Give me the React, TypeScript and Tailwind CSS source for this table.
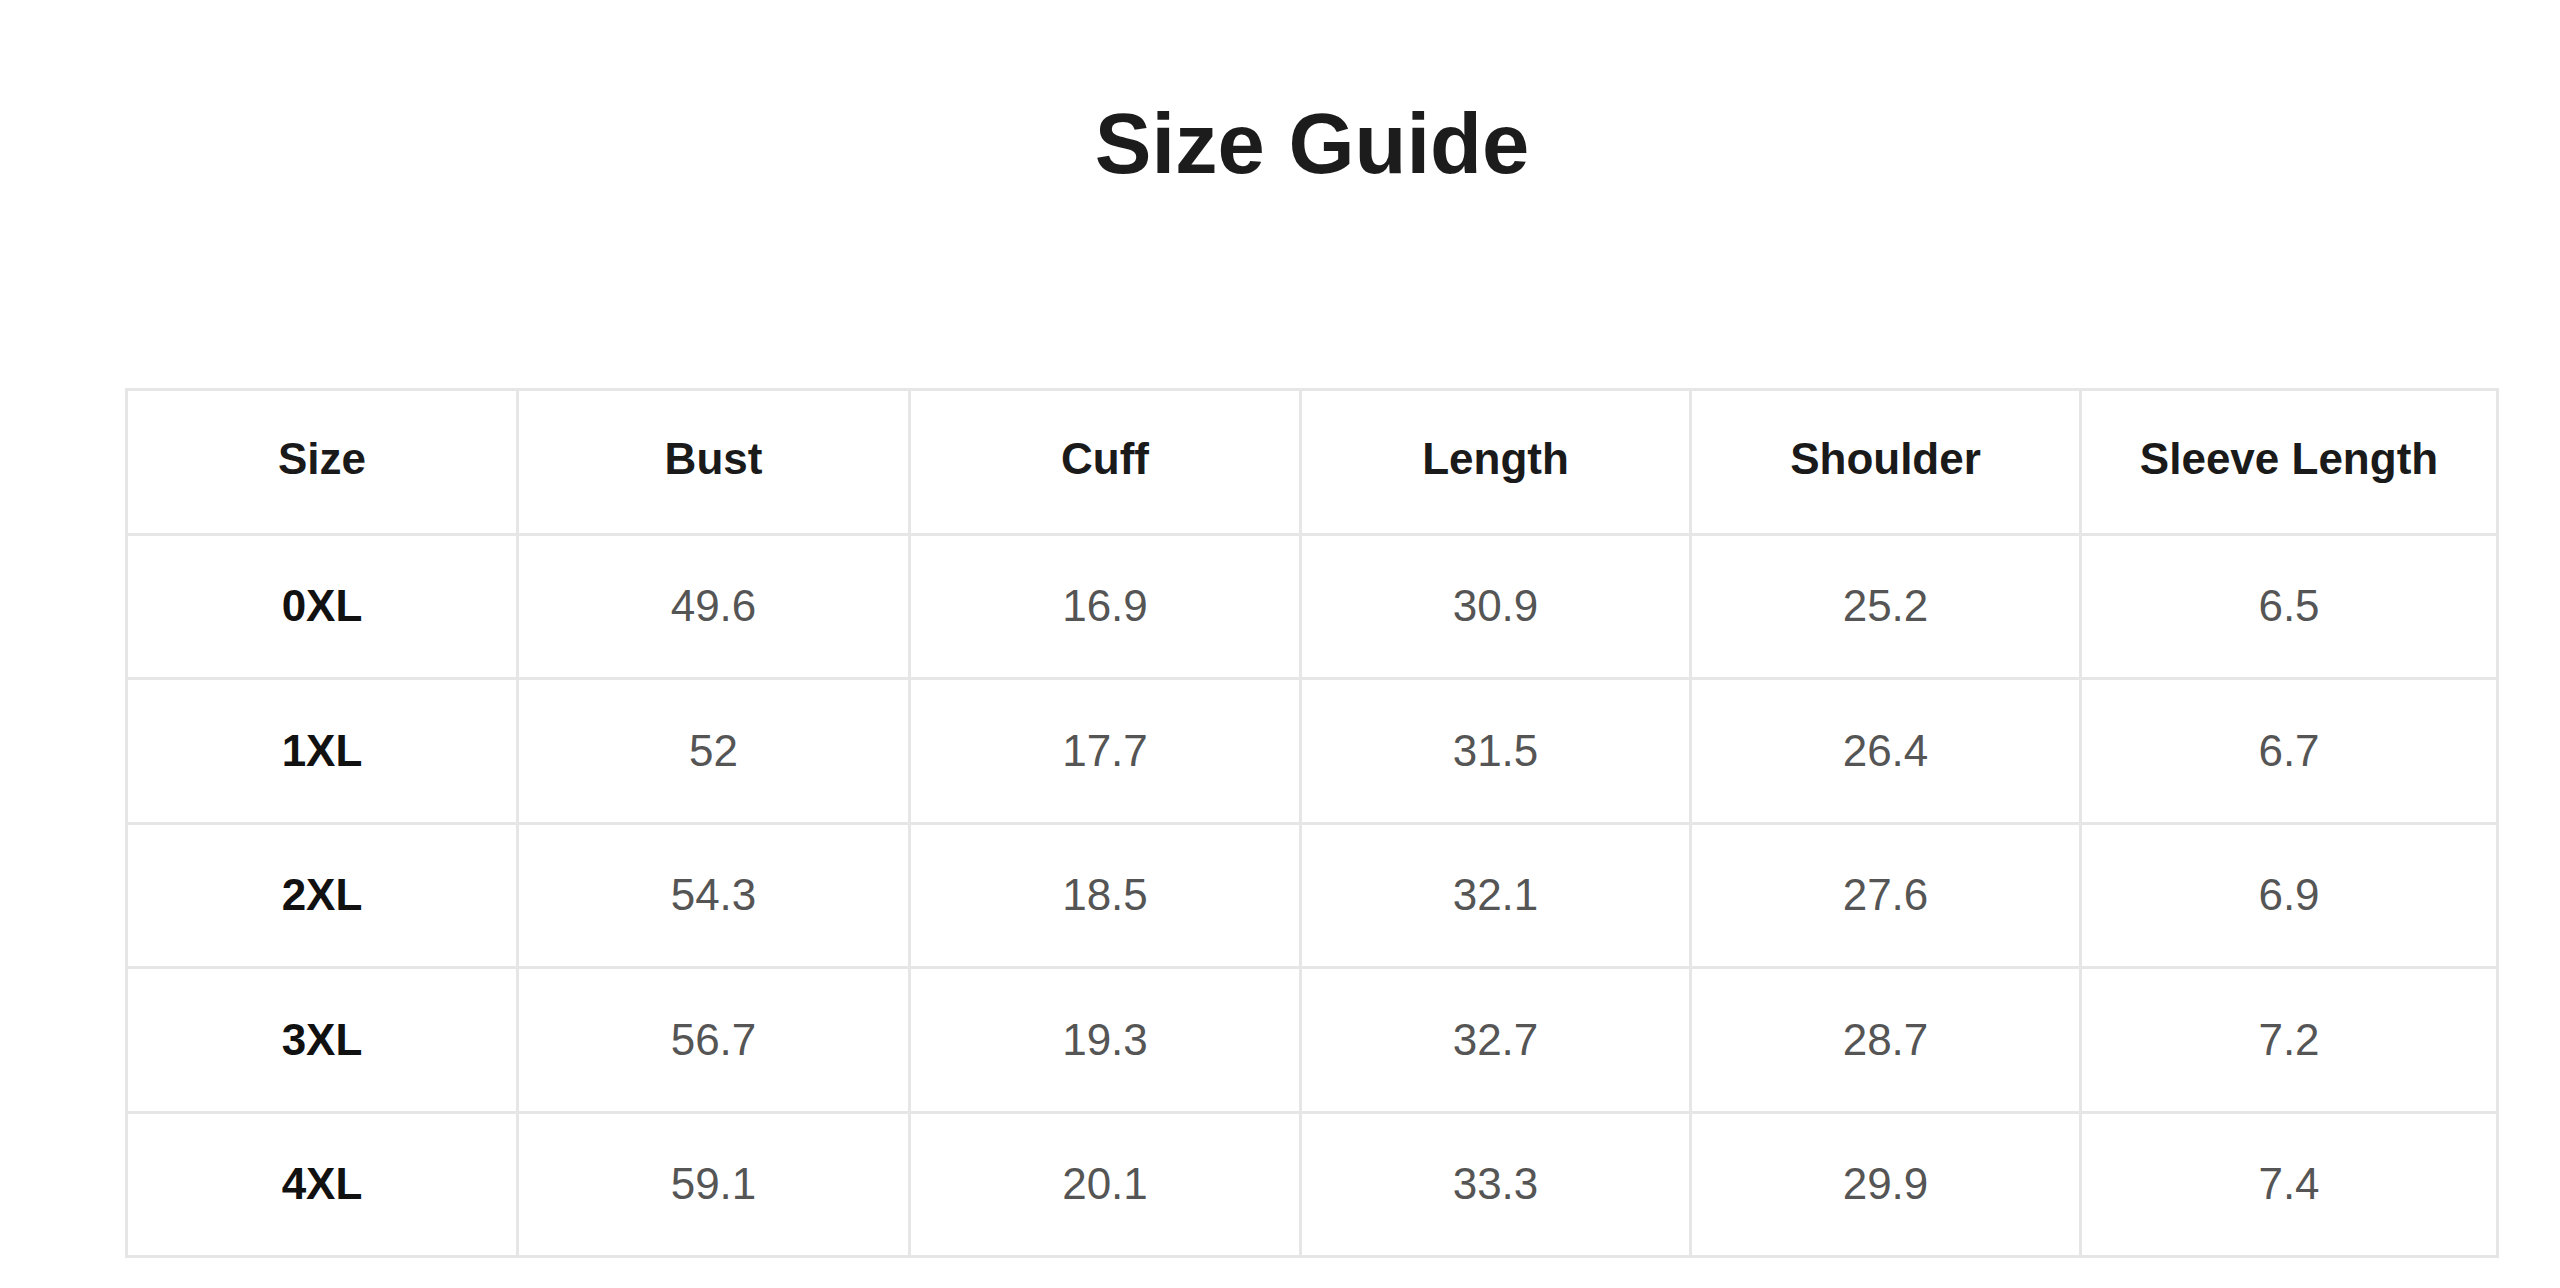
import React from "react";

const headers = ["Size", "Bust", "Cuff", "Length", "Shoulder", "Sleeve Length"];
const rows = [
  ["0XL", "49.6", "16.9", "30.9", "25.2", "6.5"],
  ["1XL", "52", "17.7", "31.5", "26.4", "6.7"],
  ["2XL", "54.3", "18.5", "32.1", "27.6", "6.9"],
  ["3XL", "56.7", "19.3", "32.7", "28.7", "7.2"],
  ["4XL", "59.1", "20.1", "33.3", "29.9", "7.4"],
];

export default function App() {
  return (
    <div
      className="w-[2560px] h-[1288px] bg-white overflow-hidden"
      style={{ fontFamily: '"Liberation Sans", Arial, sans-serif' }}
    >
      <div className="ml-[125px] w-[2374px]">
        <h1 className="pt-[101px] text-center text-[85px] leading-none font-bold text-[#1c1c1c]">
          Size Guide
        </h1>
        <div className="mt-[202px] grid grid-cols-[391px_392px_391px_390px_390px_417px] border-l-[3px] border-t-[3px] border-[#e6e6e6]">
          {headers.map((h) => (
            <div
              key={h}
              className="h-[144.5px] pb-[5px] flex items-center justify-center border-r-[3px] border-b-[3px] border-[#e6e6e6] text-[44px] font-bold text-[#1a1a1a]"
            >
              {h}
            </div>
          ))}
          {rows.map((r) =>
            r.map((c, i) => (
              <div
                key={r[0] + i}
                className={
                  i === 0
                    ? "h-[144.5px] flex items-center justify-center border-r-[3px] border-b-[3px] border-[#e6e6e6] text-[44px] font-bold text-[#111111]"
                    : "h-[144.5px] flex items-center justify-center border-r-[3px] border-b-[3px] border-[#e6e6e6] text-[44px] font-normal text-[#555555]"
                }
              >
                {c}
              </div>
            ))
          )}
        </div>
      </div>
    </div>
  );
}
